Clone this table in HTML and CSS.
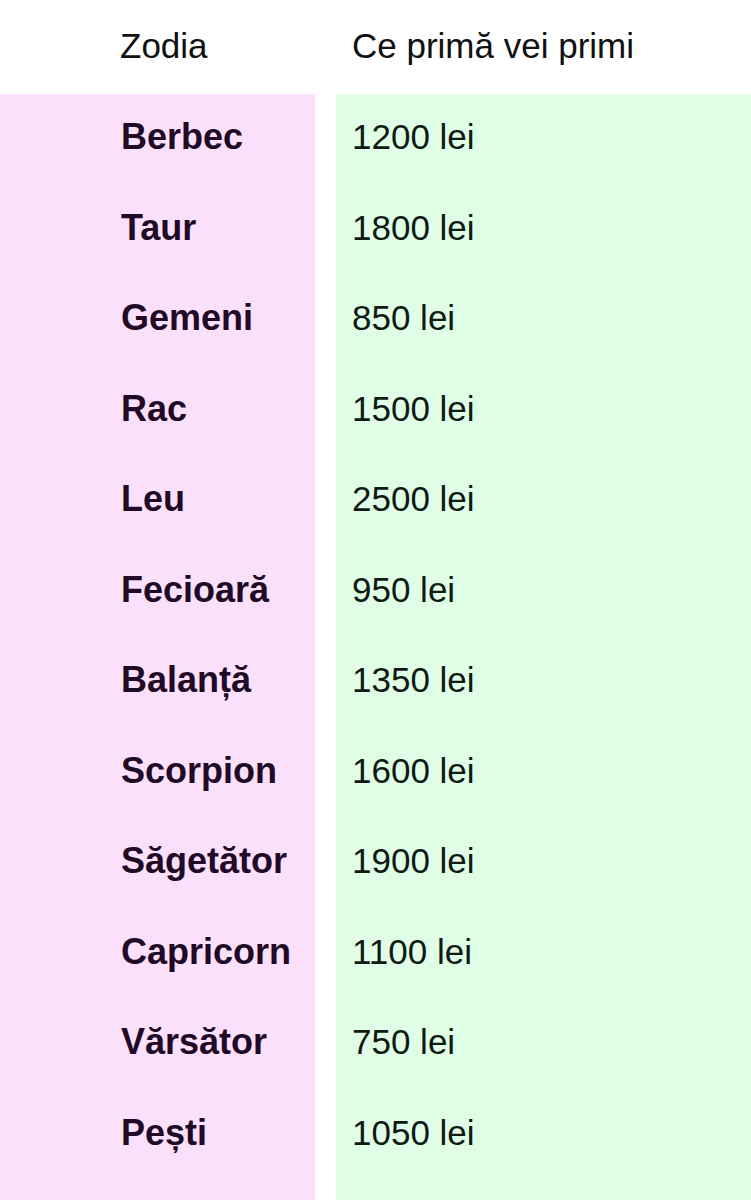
FILE: index.html
```html
<!DOCTYPE html>
<html lang="ro">
<head>
<meta charset="utf-8">
<title>Zodia</title>
<link rel="stylesheet" href="styles.css">
</head>
<body>
<div class="table">
  <div class="cell head">Zodia</div>
  <div class="cell head head-r">Ce primă vei primi</div>

  <div class="cell sign">Berbec</div><div class="cell prize">1200 lei</div>
  <div class="cell sign">Taur</div><div class="cell prize">1800 lei</div>
  <div class="cell sign">Gemeni</div><div class="cell prize">850 lei</div>
  <div class="cell sign">Rac</div><div class="cell prize">1500 lei</div>
  <div class="cell sign">Leu</div><div class="cell prize">2500 lei</div>
  <div class="cell sign">Fecioară</div><div class="cell prize">950 lei</div>
  <div class="cell sign">Balanță</div><div class="cell prize">1350 lei</div>
  <div class="cell sign">Scorpion</div><div class="cell prize">1600 lei</div>
  <div class="cell sign">Săgetător</div><div class="cell prize">1900 lei</div>
  <div class="cell sign">Capricorn</div><div class="cell prize">1100 lei</div>
  <div class="cell sign">Vărsător</div><div class="cell prize">750 lei</div>
  <div class="cell sign">Pești</div><div class="cell prize">1050 lei</div>
  <div class="cell sign filler"></div><div class="cell prize filler"></div>
</div>
</body>
</html>
```
FILE: styles.css
```css
html, body {
  margin: 0;
  padding: 0;
  background: #ffffff;
}

.table {
  display: grid;
  grid-template-columns: 315px 1fr;
  column-gap: 21px;
  font-family: "Liberation Sans", Arial, sans-serif;
  font-size: 35px;
}

.cell {
  box-sizing: border-box;
  height: 90.5px;
  line-height: 86px;
  white-space: nowrap;
}

.head {
  height: 94px;
  line-height: 92px;
  padding-left: 120px;
  color: #111111;
  font-weight: 400;
}

.head-r {
  padding-left: 16px;
}

.sign {
  background: #fbe0fb;
  padding-left: 121px;
  font-size: 36px;
  font-weight: 700;
  color: #200a26;
}

.prize {
  background: #e0fde6;
  padding-left: 16px;
  color: #0e1a12;
}

.filler {
  height: 40px;
}
```
